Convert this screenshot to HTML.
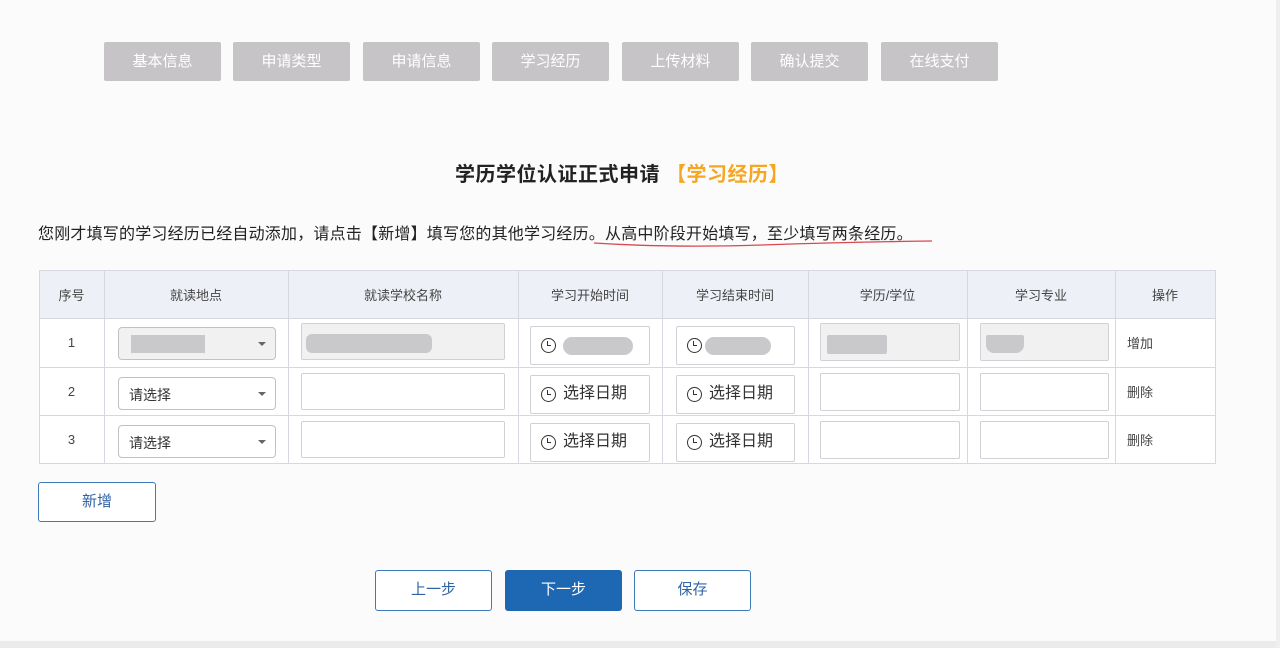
<!DOCTYPE html>
<html><head><meta charset="utf-8"><style>
*{margin:0;padding:0;box-sizing:border-box}
body{width:1280px;height:648px;background:#fcfbfc;position:relative;overflow:hidden;font-family:"Liberation Sans","Noto Sans CJK SC",sans-serif;color:#333}
.a{position:absolute}
.tab{position:absolute;top:42px;width:117px;height:39px;background:#c6c4c7;border-radius:2px;color:#fff;font-size:15px;line-height:39px;text-align:center}
.cell{position:absolute;display:flex;align-items:center;justify-content:center;font-size:13px;color:#444}
.vl{position:absolute;top:270px;height:194px;width:1px;background:#d6d8e0}
.hl{position:absolute;left:39px;width:1177px;height:1px;background:#d6d8e0}
.inp{position:absolute;height:38px;border:1px solid #cfd1d6;background:#fff;border-radius:2px}
.sel{border-radius:4px;border-color:#bfc1c6}
.dis{background:#f1f1f2}
.caret{position:absolute;right:9px;top:16px;width:0;height:0;border-left:4px solid transparent;border-right:4px solid transparent;border-top:4px solid #666}
.blur{position:absolute;background:#c9c9cb;border-radius:6px}
.clk{position:absolute;left:10px;top:11px;width:15px;height:15px;border:1.8px solid #333;border-radius:50%}
.clk:after{content:"";position:absolute;left:4.5px;top:2px;width:3px;height:4px;border-left:1.5px solid #333;border-bottom:1.5px solid #333}
.dt{position:absolute;left:32px;top:7px;font-size:16px;line-height:22px;color:#333}
.btn{position:absolute;height:41px;width:118px;border:1.5px solid #3f7ab8;border-radius:3px;background:#fff;color:#2f64a4;font-size:15px;text-align:center;line-height:38px}
</style></head><body>
<div class="tab" style="left:104px">基本信息</div>
<div class="tab" style="left:233px">申请类型</div>
<div class="tab" style="left:363px">申请信息</div>
<div class="tab" style="left:492px">学习经历</div>
<div class="tab" style="left:622px">上传材料</div>
<div class="tab" style="left:751px">确认提交</div>
<div class="tab" style="left:881px">在线支付</div>

<div class="a" style="left:455px;top:158px;font-size:20px;font-weight:bold;color:#222;white-space:nowrap;letter-spacing:0.5px">学历学位认证正式申请 <span style="color:#f5a623">【学习经历】</span></div>
<div class="a" style="left:38px;top:220px;font-size:16px;letter-spacing:0.2px;color:#222;white-space:nowrap">您刚才填写的学习经历已经自动添加，请点击【新增】填写您的其他学习经历。从高中阶段开始填写，至少填写两条经历。</div>
<svg class="a" style="left:592px;top:238px" width="345" height="12"><path d="M2 5 Q80 10 170 7 Q260 4 340 3" stroke="#d8484e" stroke-width="1.3" fill="none"/></svg>

<div class="a" style="left:39px;top:270px;width:1177px;height:48px;background:#eef0f7"></div>
<div class="a" style="left:39px;top:318px;width:1177px;height:146px;background:#fff"></div>
<div class="hl" style="top:270px"></div><div class="hl" style="top:318px"></div><div class="hl" style="top:367px"></div><div class="hl" style="top:415px"></div><div class="hl" style="top:463px"></div>
<div class="vl" style="left:39px"></div><div class="vl" style="left:104px"></div><div class="vl" style="left:288px"></div><div class="vl" style="left:518px"></div><div class="vl" style="left:662px"></div><div class="vl" style="left:808px"></div><div class="vl" style="left:967px"></div><div class="vl" style="left:1115px"></div><div class="vl" style="left:1215px"></div>

<div class="cell" style="left:39px;top:270px;width:65px;height:48px">序号</div>
<div class="cell" style="left:104px;top:270px;width:184px;height:48px">就读地点</div>
<div class="cell" style="left:288px;top:270px;width:230px;height:48px">就读学校名称</div>
<div class="cell" style="left:518px;top:270px;width:144px;height:48px">学习开始时间</div>
<div class="cell" style="left:662px;top:270px;width:146px;height:48px">学习结束时间</div>
<div class="cell" style="left:808px;top:270px;width:159px;height:48px">学历/学位</div>
<div class="cell" style="left:967px;top:270px;width:148px;height:48px">学习专业</div>
<div class="cell" style="left:1115px;top:270px;width:100px;height:48px">操作</div>

<div class="cell" style="left:39px;top:318px;width:65px;height:49px">1</div>
<div class="cell" style="left:39px;top:367px;width:65px;height:48px">2</div>
<div class="cell" style="left:39px;top:415px;width:65px;height:48px">3</div>
<div class="cell" style="left:1115px;top:318px;width:50px;height:49px">增加</div>
<div class="cell" style="left:1115px;top:367px;width:50px;height:48px">删除</div>
<div class="cell" style="left:1115px;top:415px;width:50px;height:48px">删除</div>

<!-- row 1 -->
<div class="inp sel dis" style="left:118px;top:327px;width:158px;height:33px"><div class="blur" style="left:12px;top:7px;width:74px;height:18px;border-radius:0"></div><div class="caret" style="top:14px"></div></div>
<div class="inp dis" style="left:301px;top:323px;width:204px;height:37px"><div class="blur" style="left:4px;top:10px;width:126px;height:19px"></div></div>
<div class="inp" style="left:530px;top:326px;width:120px;height:39px"><div class="clk"></div><div class="blur" style="left:32px;top:10px;width:70px;height:18px;border-radius:9px"></div></div>
<div class="inp" style="left:676px;top:326px;width:119px;height:39px"><div class="clk"></div><div class="blur" style="left:28px;top:10px;width:66px;height:18px;border-radius:9px"></div></div>
<div class="inp dis" style="left:820px;top:323px;width:140px;height:38px"><div class="blur" style="left:6px;top:11px;width:60px;height:19px;border-radius:2px"></div></div>
<div class="inp dis" style="left:980px;top:323px;width:129px;height:38px"><div class="blur" style="left:5px;top:11px;width:38px;height:18px;border-radius:2px 2px 8px 8px"></div></div>

<!-- row 2 -->
<div class="inp sel" style="left:118px;top:377px;width:158px;height:33px"><span style="position:absolute;left:10px;top:7px;font-size:14px">请选择</span><div class="caret" style="top:14px"></div></div>
<div class="inp" style="left:301px;top:373px;width:204px;height:37px"></div>
<div class="inp" style="left:530px;top:375px;width:120px;height:39px"><div class="clk"></div><span class="dt">选择日期</span></div>
<div class="inp" style="left:676px;top:375px;width:119px;height:39px"><div class="clk"></div><span class="dt">选择日期</span></div>
<div class="inp" style="left:820px;top:373px;width:140px;height:38px"></div>
<div class="inp" style="left:980px;top:373px;width:129px;height:38px"></div>

<!-- row 3 -->
<div class="inp sel" style="left:118px;top:425px;width:158px;height:33px"><span style="position:absolute;left:10px;top:7px;font-size:14px">请选择</span><div class="caret" style="top:14px"></div></div>
<div class="inp" style="left:301px;top:421px;width:204px;height:37px"></div>
<div class="inp" style="left:530px;top:423px;width:120px;height:39px"><div class="clk"></div><span class="dt">选择日期</span></div>
<div class="inp" style="left:676px;top:423px;width:119px;height:39px"><div class="clk"></div><span class="dt">选择日期</span></div>
<div class="inp" style="left:820px;top:421px;width:140px;height:38px"></div>
<div class="inp" style="left:980px;top:421px;width:129px;height:38px"></div>

<div class="btn" style="left:38px;top:482px;width:118px;height:40px">新增</div>
<div class="btn" style="left:375px;top:570px;width:117px">上一步</div>
<div class="btn" style="left:505px;top:570px;width:117px;background:#1e67b2;border-color:#1e67b2;color:#fff">下一步</div>
<div class="btn" style="left:634px;top:570px;width:117px">保存</div>

<div class="a" style="left:0;top:641px;width:1280px;height:7px;background:#ebebee"></div>
<div class="a" style="left:1276px;top:0;width:4px;height:648px;background:#efeff1"></div>
</body></html>
